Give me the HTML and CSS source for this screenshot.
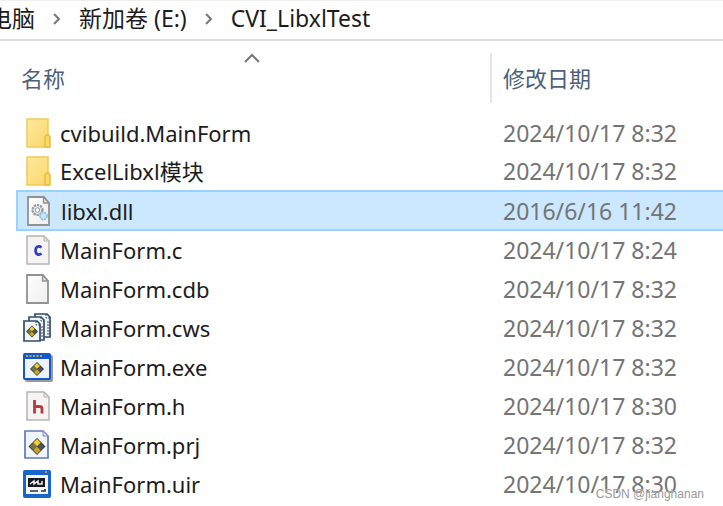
FILE: index.html
```html
<!DOCTYPE html>
<html lang="zh-CN">
<head>
<meta charset="utf-8">
<meta name="viewport" content="width=device-width, initial-scale=1">
<title>CVI_LibxlTest</title>
<link rel="stylesheet" href="styles.css">
</head>
<body>
<svg class="defs" width="0" height="0" aria-hidden="true">
  <defs>
    <linearGradient id="fold" x2="1" y2="1"><stop offset="0" stop-color="#ffe9a0"/><stop offset="1" stop-color="#fad766"/></linearGradient>
    <linearGradient id="paper" x2="1" y2="1"><stop offset="0" stop-color="#fefefe"/><stop offset="1" stop-color="#eeeeee"/></linearGradient>
    <symbol id="folder" viewBox="0 0 32 32">
      <path d="M5 2h21v28H5z" fill="url(#fold)" stroke="#efca58" stroke-width="1.5"/>
      <path d="M23 30V20l1.500-2h2l1.500 2v10z" fill="#fbd966" stroke="#e6bd43" stroke-width="1.500"/>
    </symbol>
    <symbol id="page" viewBox="0 0 32 32">
      <path d="M5 2h16l5 6v22H5z" fill="url(#paper)" stroke="#929292" stroke-width="1.8"/>
      <path d="M20.500 2v6h5.500z" fill="#ddd" stroke="#929292" stroke-width="1.3"/>
    </symbol>
    <symbol id="lightpage" viewBox="0 0 32 32">
      <path d="M5 2h17l5 5v23H5z" fill="#f7f3f3" stroke="#b7b4b4" stroke-width="1.5"/>
      <path d="M22 2v5h5z" fill="#ddd" stroke="#b7b4b4"/>
    </symbol>
    <symbol id="gem" viewBox="0 0 16 16">
      <path d="M8 0l8 8-8 8-8-8z" fill="#30343a"/>
      <path d="M8 1l3.500 3.500L8 8 4.500 4.500z" fill="#f6cf20"/>
      <path d="M4.500 4.500L8 8l-3.500 3.500L1 8z" fill="#77733f"/>
      <path d="M8 8l3.500 3.500L8 15l-3.500-3.500z" fill="#c5a629"/>
      <path d="M11.500 4.500L15 8l-3.500 3.500L8 8z" fill="#4c5259"/>
    </symbol>
    <symbol id="dll" viewBox="0 0 32 32">
      <use href="#page"/>
      <circle cx="14.500" cy="15" r="5" fill="#e6eaed" stroke="#8f979d" stroke-width="2.200" stroke-dasharray="2.200 1"/>
      <circle cx="14.500" cy="15" r="2.200" fill="#fff" stroke="#8f979d"/>
      <circle cx="20.500" cy="21" r="3.500" fill="#c6e5f5" stroke="#91c2dc" stroke-width="1.800" stroke-dasharray="2 .8"/>
    </symbol>
    <symbol id="c" viewBox="0 0 32 32">
      <use href="#lightpage"/>
      <path d="M19.500 13.500c-3-2.500-6-.5-6 3s3 5.500 6 3" fill="none" stroke="#2b3fc0" stroke-width="2.800"/>
    </symbol>
    <symbol id="h" viewBox="0 0 32 32">
      <use href="#lightpage"/>
      <path d="M12.500 10v13.500M12.500 16.500h5q2.500 0 2.500 2.500v4.500" fill="none" stroke="#b93a3f" stroke-width="2.800"/>
    </symbol>
    <symbol id="cws" viewBox="0 0 32 32">
      <g fill="#f1f5f8" stroke="#344c66" stroke-width="1.700">
        <path d="M13 2h12l3 3v20H13z"/><path d="M7 5h12l3 3v20H7z"/><path d="M2 9h13l3 3v17H2z"/>
      </g>
      <path d="M14 9v4h4M19 5v4h3M24 2v4h4M20 14v12M26 9v14" fill="none" stroke="#344c66" stroke-dasharray="2 1"/>
      <use href="#gem" x="4" y="13" width="12" height="13"/>
    </symbol>
    <symbol id="exe" viewBox="0 0 32 32">
      <rect x="3" y="4" width="28" height="27" rx="2" fill="#999"/>
      <rect x="1" y="2" width="28" height="27" rx="2" fill="#1557c8"/>
      <path d="M3 8h24v19H3z" fill="#edf3fa"/>
      <path d="M4 5h17" stroke="#d7c54f" stroke-width="1.500" stroke-dasharray="2 1.500"/>
      <use href="#gem" x="8" y="11" width="14" height="14"/>
    </symbol>
    <symbol id="prj" viewBox="0 0 32 32">
      <path d="M3 2h18l5 5v22H3z" fill="#f2f4fc" stroke="#6178bd" stroke-width="1.700"/>
      <path d="M21 2v5h5z" fill="#cad4f0" stroke="#8294c8"/>
      <use href="#gem" x="6" y="9" width="18" height="17"/>
    </symbol>
    <symbol id="uir" viewBox="0 0 32 32">
      <rect x="1" y="2" width="28" height="28" rx="2" fill="#1764cb"/>
      <path d="M4 7h22v19H4z" fill="#f3f5f7"/>
      <path d="M24 3v2" stroke="#d78b65" stroke-width="2"/>
      <path d="M6 10h17v9H6z" fill="#161a20"/>
      <path d="M8 16l4-3v3l4-3v3h4v-3" fill="none" stroke="#eee" stroke-width="1.500"/>
      <path d="M8 23h8M19 23h4v-2" fill="none" stroke="#30343a" stroke-width="1.700"/>
    </symbol>
  </defs>
</svg>
<nav class="path" aria-label="路径">
  <a href="#">电脑</a>
  <svg class="chevron" viewBox="0 0 8 12"><path d="M1 1l5 5-5 5"/></svg>
  <a href="#">新加卷 (E:)</a>
  <svg class="chevron" viewBox="0 0 8 12"><path d="M1 1l5 5-5 5"/></svg>
  <a href="#">CVI_LibxlTest</a>
</nav>
<main>
<table class="files">
  <thead>
    <tr>
      <th class="name" scope="col" aria-sort="ascending"><div class="heading"><svg class="sort" viewBox="0 0 16 10"><path d="M1 9l7-7 7 7"/></svg><span>名称</span></div></th>
      <th scope="col"><div class="heading second"><span>修改日期</span></div></th>
    </tr>
  </thead>
  <tbody>
    <tr><td><div class="file"><svg class="icon"><use href="#folder"/></svg>cvibuild.MainForm</div></td><td class="date">2024/10/17 8:32</td></tr>
    <tr><td><div class="file"><svg class="icon"><use href="#folder"/></svg>ExcelLibxl模块</div></td><td class="date">2024/10/17 8:32</td></tr>
    <tr class="selected"><td><div class="file"><svg class="icon"><use href="#dll"/></svg>libxl.dll</div></td><td class="date">2016/6/16 11:42</td></tr>
    <tr><td><div class="file"><svg class="icon"><use href="#c"/></svg>MainForm.c</div></td><td class="date">2024/10/17 8:24</td></tr>
    <tr><td><div class="file"><svg class="icon"><use href="#page"/></svg>MainForm.cdb</div></td><td class="date">2024/10/17 8:32</td></tr>
    <tr><td><div class="file"><svg class="icon"><use href="#cws"/></svg>MainForm.cws</div></td><td class="date">2024/10/17 8:32</td></tr>
    <tr><td><div class="file"><svg class="icon"><use href="#exe"/></svg>MainForm.exe</div></td><td class="date">2024/10/17 8:32</td></tr>
    <tr><td><div class="file"><svg class="icon"><use href="#h"/></svg>MainForm.h</div></td><td class="date">2024/10/17 8:30</td></tr>
    <tr><td><div class="file"><svg class="icon"><use href="#prj"/></svg>MainForm.prj</div></td><td class="date">2024/10/17 8:32</td></tr>
    <tr><td><div class="file"><svg class="icon"><use href="#uir"/></svg>MainForm.uir</div></td><td class="date">2024/10/17 8:30</td></tr>
  </tbody>
</table>
</main>
<div class="watermark">CSDN @jianghanan</div>
</body>
</html>
```
FILE: styles.css
```css
* { box-sizing: border-box; }
body {
  margin: 0;
  background: #fff;
  color: #1c1c1c;
  font: 22px/28px "Noto Sans", "Noto Sans CJK SC", sans-serif;
  overflow: hidden;
}
.defs { position: absolute; }
.path {
  display: flex;
  align-items: center;
  height: 41px;
  margin-left: -11px;
  padding-bottom: 5px;
  border-top: 1px solid #eee;
  border-bottom: 2px solid #dedede;
  font-size: 23px;
  white-space: nowrap;
}
.path a { color: inherit; text-decoration: none; }
.chevron {
  flex: none;
  width: 8px;
  height: 12px;
  margin: 2px 18px 0;
  fill: none;
  stroke: #777;
  stroke-width: 2;
}
main { padding-left: 16px; }
.files {
  width: 100%;
  table-layout: fixed;
  border-collapse: collapse;
}
th, td { padding: 0; text-align: left; font-weight: 400; }
.name { width: 473px; }
thead tr { height: 72px; vertical-align: top; }
.heading {
  position: relative;
  display: flex;
  align-items: center;
  height: 50px;
  margin-top: 12px;
  padding-left: 4px;
  color: #4c607a;
}
.second { padding-left: 11px; border-left: 2px solid #e5e5e5; }
.sort {
  position: absolute;
  top: 0;
  left: 50%;
  width: 16px;
  height: 10px;
  margin-left: -10px;
  fill: none;
  stroke: #777;
  stroke-width: 2;
}
tbody tr { height: 39px; }
.file {
  display: flex;
  align-items: center;
  gap: 6px;
  padding-left: 5px;
  white-space: nowrap;
}
.icon { flex: none; width: 32px; height: 32px; }
.date { padding-left: 13px; color: #747474; font-size: 23px; white-space: nowrap; }
.selected { background: #cce8ff; }
.selected td { border-top: 2px solid #99d1ff; border-bottom: 2px solid #99d1ff; }
.selected td:first-child { border-left: 2px solid #99d1ff; }
.watermark {
  position: absolute;
  right: 19px;
  bottom: 3px;
  color: #999;
  font: 12px/18px "Liberation Sans", sans-serif;
  text-shadow: 0 0 1px #fff;
}
```
